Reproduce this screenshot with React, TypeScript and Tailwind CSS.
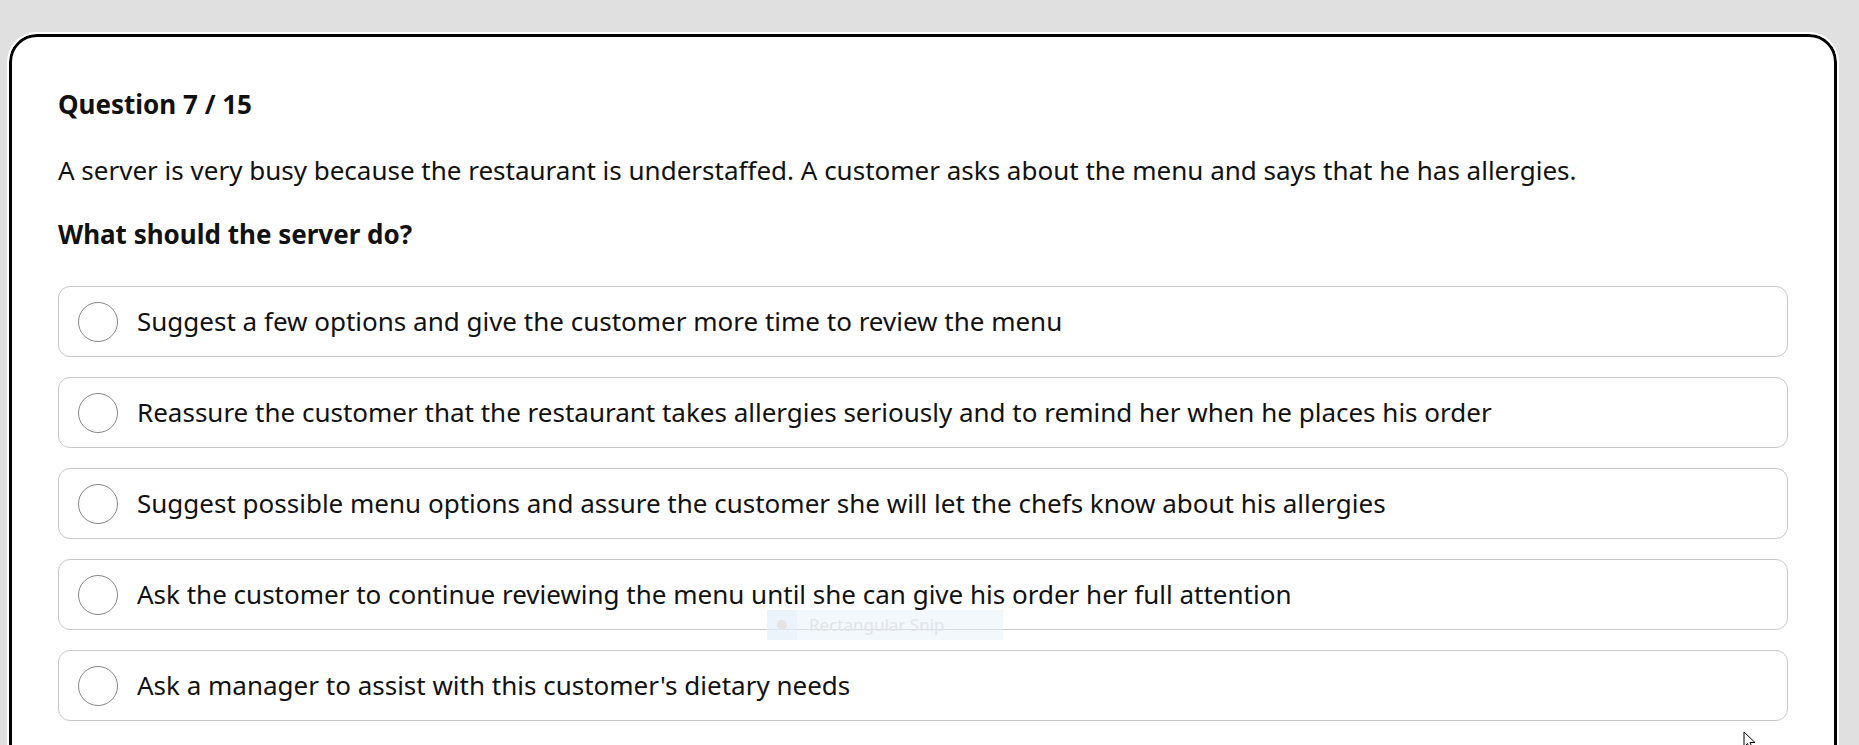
const options = [
  'Suggest a few options and give the customer more time to review the menu',
  'Reassure the customer that the restaurant takes allergies seriously and to remind her when he places his order',
  'Suggest possible menu options and assure the customer she will let the chefs know about his allergies',
  'Ask the customer to continue reviewing the menu until she can give his order her full attention',
  "Ask a manager to assist with this customer's dietary needs",
];

function OptionRow({ label }: { label: string }) {
  return (
    <button className="flex h-[71px] w-full items-center gap-[19px] rounded-[12px] border border-[#c8c8c8] bg-white pl-[19px] text-left">
      <span className="h-[40px] w-[40px] shrink-0 rounded-full border-[1.5px] border-[#858585]" />
      <span className="text-[26px] text-[#111111]">{label}</span>
    </button>
  );
}

export default function App() {
  return (
    <div className="relative h-[745px] overflow-hidden bg-[#e0e0e0] pt-[34px] pl-[9px] font-['Noto_Sans',sans-serif]">
      {/* Question card */}
      <div className="h-[900px] w-[1828px] rounded-[28px] border-[3px] border-black bg-white px-[46px] pt-[49px] outline-2 outline-white">
        <h2 className="text-[26px] font-bold leading-[36px] text-[#111111]">Question 7 / 15</h2>
        <p className="mt-[30px] text-[26px] leading-[36px] text-[#111111]">
          A server is very busy because the restaurant is understaffed. A customer asks about the menu and says that he has allergies.
        </p>
        <p className="mt-[28px] text-[26px] font-bold leading-[36px] text-[#111111]">What should the server do?</p>

        <div className="mt-[34px] flex flex-col gap-[20px]">
          {options.map((o) => (
            <OptionRow key={o} label={o} />
          ))}
        </div>
      </div>

      {/* Faded snipping tool toast */}
      <div className="absolute left-[767px] top-[610px] flex h-[30px] w-[236px] items-center bg-[#e8f1fb]/50">
        <div className="flex h-full w-[30px] items-center justify-center bg-[#dfeaf7]/40">
          <span className="h-[10px] w-[10px] rounded-full bg-[#e4e4e4]" />
        </div>
        <span className="ml-[12px] text-[17px] text-[#e2e4e8]">Rectangular Snip</span>
      </div>

      {/* Mouse cursor */}
      <svg className="absolute left-[1743px] top-[731px]" width="14" height="20" viewBox="0 0 14 20">
        <path d="M1 1 L1 16 L4.5 12.5 L7 18.5 L9.5 17.5 L7 11.5 L12 11.5 Z" fill="white" stroke="black" strokeWidth="1" />
      </svg>
    </div>
  );
}
